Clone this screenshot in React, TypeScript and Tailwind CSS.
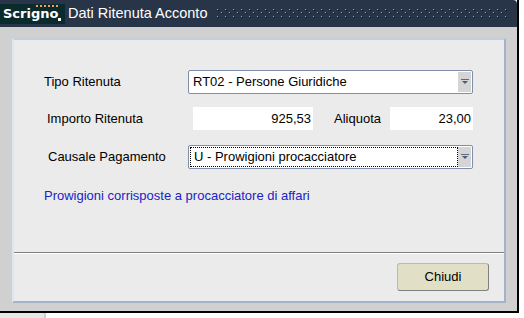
import { ReactNode } from "react";

const font = { fontFamily: '"Liberation Sans", Arial, sans-serif' };

// Window-style dropdown with small grey arrow button on the right
const Select = ({ value, focused }: { value: string; focused?: boolean }) => (
  <div className="flex h-[24px] w-[285px] items-stretch rounded-[2px] border border-[#7f8fa9] bg-white p-[1px]">
    <div
      className={`flex flex-1 items-center pl-[3px] text-[13px] text-black ${
        focused ? "border border-dotted border-black" : ""
      }`}
    >
      {value}
    </div>
    <div className="flex w-[13px] flex-col items-center justify-center bg-[#d5d5d5]">
      <svg width="8" height="6" viewBox="0 0 8 6">
        <rect x="0" y="0" width="8" height="1" fill="#5a6a86" />
        <path d="M1 2 H7 L4 5 Z" fill="#4c5c7a" />
      </svg>
    </div>
  </div>
);

const Field = ({ value, className }: { value: string; className: string }) => (
  <div className={`flex h-[23px] items-center justify-end bg-white pr-[2px] text-[13px] text-black ${className}`}>
    {value}
  </div>
);

const Row = ({ children, className }: { children: ReactNode; className: string }) => (
  <div className={`flex items-center ${className}`}>{children}</div>
);

const App = () => {
  return (
    <div className="relative h-[318px] w-[524px] overflow-hidden bg-white" style={font}>
      {/* WINDOW */}
      <div className="flex h-[313px] w-[519px] flex-col border-r-2 border-b-2 border-black">
        {/* TITLE BAR */}
        <div className="flex h-[27px] items-center rounded-tr-[4px] bg-[#283548]">
          <div className="relative flex h-[20px] w-[65px] items-center bg-[#0b2a2c] pl-[3px]">
            <span
              className="text-[13px] font-bold leading-none text-white"
              style={{ fontFamily: '"DejaVu Sans", sans-serif' }}
            >
              Scrigno
            </span>
            <div className="absolute top-[1px] left-[36px] flex gap-[2px]">
              {[0, 1, 2, 3, 4, 5].map((i) => (
                <div key={i} className="h-[2px] w-[2px] bg-[#f39a5e]" />
              ))}
            </div>
            <div className="absolute bottom-[3px] left-[58px] h-[3px] w-[3px] bg-white" />
          </div>
          <span className="ml-[3px] text-[14.5px] text-white">Dati Ritenuta Acconto</span>
          <svg className="ml-[10px] h-[12px] flex-1" preserveAspectRatio="none">
            <defs>
              <pattern id="dots" width="8" height="12" patternUnits="userSpaceOnUse">
                <rect x="0" y="1" width="1" height="1" fill="#9aa6b8" />
                <rect x="1" y="2" width="1" height="1" fill="#0d141e" />
                <rect x="4" y="4" width="1" height="1" fill="#9aa6b8" />
                <rect x="5" y="5" width="1" height="1" fill="#0d141e" />
                <rect x="0" y="8" width="1" height="1" fill="#9aa6b8" />
                <rect x="1" y="9" width="1" height="1" fill="#0d141e" />
              </pattern>
            </defs>
            <rect x="0" y="0" width="100%" height="12" fill="url(#dots)" />
          </svg>
          <div className="w-[8px]" />
        </div>

        {/* BODY */}
        <div className="flex flex-1 flex-col bg-[#d0d0d0] pt-[11px] pr-[11px] pb-[8px] pl-[12px]">
          <div className="flex flex-1 flex-col border-2 border-t-[#c3cede] border-r-[#a3b2c8] border-b-[#a3b2c8] border-l-[#dfe6f0] bg-[#ebebeb]">
            {/* FORM */}
            <div className="flex flex-1 flex-col pt-[30px]">
              <Row className="pl-[30px]">
                <span className="w-[144px] text-[13px] text-black">Tipo Ritenuta</span>
                <Select value="RT02 - Persone Giuridiche" />
              </Row>

              <Row className="mt-[13px] pl-[33px]">
                <span className="w-[146px] text-[13px] text-black">Importo Ritenuta</span>
                <Field value="925,53" className="w-[120px]" />
                <span className="ml-[21px] w-[56px] text-[13px] text-black">Aliquota</span>
                <Field value="23,00" className="w-[83px]" />
              </Row>

              <Row className="mt-[15px] pl-[34px]">
                <span className="w-[140px] text-[13px] text-black">Causale Pagamento</span>
                <Select value="U - Prowigioni procacciatore" focused />
              </Row>

              <div className="mt-[17px] pl-[30px] text-[13px] text-[#2222c4]">
                Prowigioni corrisposte a procacciatore di affari
              </div>
            </div>

            {/* FOOTER */}
            <div className="flex h-[49px] items-center justify-end border-t border-t-[#808080] pr-[15px] shadow-[inset_0_1px_0_#ffffff]">
              <button className="h-[28px] w-[92px] rounded-[3px] border border-t-[#b8b8b8] border-r-[#808080] border-b-[#808080] border-l-[#b8b8b8] bg-[#e1dfc5] text-[13px] text-black">
                Chiudi
              </button>
            </div>
          </div>
        </div>
      </div>

      {/* UNDERLYING SCREEN */}
      <div className="flex h-[5px]">
        <div className="w-[46px] border-r-2 border-r-[#c8d0dc] bg-[#e6e6e6]" />
      </div>
    </div>
  );
};

export default App;
